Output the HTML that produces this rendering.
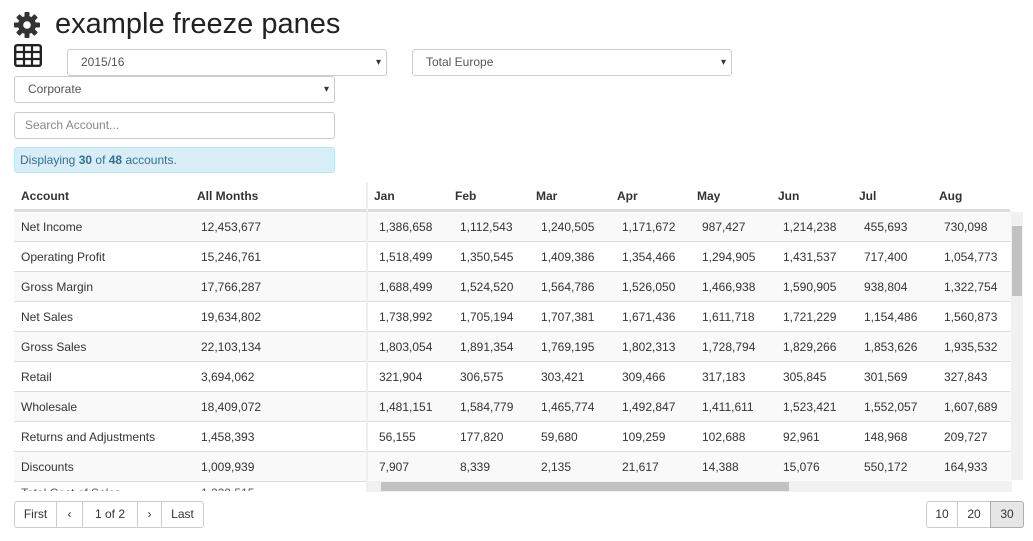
<!DOCTYPE html>
<html><head><meta charset="utf-8"><style>
*{box-sizing:border-box;margin:0;padding:0}
body{width:1033px;height:541px;overflow:hidden;background:#fff;font-family:"Liberation Sans",sans-serif;color:#333;font-size:12px;position:relative}
.a{position:absolute}
.sel{position:absolute;border:1px solid #ccc;border-radius:3px;height:27px;line-height:25px;padding-left:13px;font-size:12px;color:#555;background:#fff}
.sel:after{content:"▾";position:absolute;right:5px;top:0;font-size:10px;color:#333}
.hd{position:absolute;top:182px;height:28px;line-height:28px;font-weight:bold;font-size:12px;color:#333}
.row{position:absolute;height:30px;line-height:32px;border-top:1px solid #ddd;font-size:12px}
.row span{position:absolute;top:0}
.pg{position:absolute;top:501px;height:27px;line-height:25px;border:1px solid #ccc;text-align:center;font-size:12px;color:#333;background:#fff}
</style></head><body>
<svg class="a" style="left:14px;top:12px" width="26" height="26" viewBox="0 0 26 26"><g fill="#333"><circle cx="13" cy="13" r="9"/><g><rect x="10.5" y="0" width="5" height="26" rx="1"/><rect x="10.5" y="0" width="5" height="26" rx="1" transform="rotate(45 13 13)"/><rect x="10.5" y="0" width="5" height="26" rx="1" transform="rotate(90 13 13)"/><rect x="10.5" y="0" width="5" height="26" rx="1" transform="rotate(135 13 13)"/></g></g><circle cx="13" cy="13" r="3.8" fill="#fff"/></svg>
<div class="a" style="left:55px;top:6px;font-size:29px;color:#222;line-height:36px">example freeze panes</div>
<svg class="a" style="left:14px;top:44px" width="28" height="23" viewBox="0 0 28 23"><rect x="1.2" y="1.2" width="25.6" height="20.6" rx="2" fill="none" stroke="#222" stroke-width="2.4"/><path d="M1 8H27M1 15H27M10 1V22M18 1V22" stroke="#222" stroke-width="2.2"/></svg>
<div class="sel" style="left:67px;top:49px;width:320px">2015/16</div>
<div class="sel" style="left:412px;top:49px;width:320px">Total Europe</div>
<div class="sel" style="left:14px;top:76px;width:321px">Corporate</div>
<div class="a" style="left:14px;top:112px;width:321px;height:27px;border:1px solid #ccc;border-radius:3px;line-height:25px;padding-left:10px;color:#888">Search Account...</div>
<div class="a" style="left:14px;top:147px;width:321px;height:26px;border:1px solid #bce8f1;background:#d9edf7;border-radius:3px;line-height:24px;padding-left:5px;color:#31708f">Displaying <b>30</b> of <b>48</b> accounts.</div>
<div class="hd" style="left:21px">Account</div>
<div class="hd" style="left:197px">All Months</div>
<div class="hd" style="left:374px">Jan</div><div class="hd" style="left:455px">Feb</div><div class="hd" style="left:536px">Mar</div><div class="hd" style="left:617px">Apr</div><div class="hd" style="left:697px">May</div><div class="hd" style="left:778px">Jun</div><div class="hd" style="left:859px">Jul</div><div class="hd" style="left:939px">Aug</div>
<div class="a" style="left:14px;top:209px;width:996px;height:3px;background:#ddd"></div>
<div class="a" style="left:366px;top:182px;width:2px;height:310px;background:#eee"></div>
<div id="rows"></div>
<div class="a" style="left:368px;top:481px;width:644px;height:11px;background:#f1f1f1"></div>
<div class="a" style="left:381px;top:482px;width:408px;height:9px;background:#c1c1c1"></div>
<div class="a" style="left:1011px;top:212px;width:12px;height:268px;background:#f1f1f1"></div>
<div class="a" style="left:1012px;top:226px;width:10px;height:70px;background:#c1c1c1"></div>
<div class="a" style="left:14px;top:482px;width:352px;height:9px;overflow:hidden"><div style="position:absolute;top:4px;left:7px;color:#555">Total Cost of Sales</div><div style="position:absolute;top:4px;left:187px;color:#555">1,229,515</div></div>
<div class="pg" style="left:14px;width:43px;border-radius:3px 0 0 3px">First</div>
<div class="pg" style="left:56px;width:27px">‹</div>
<div class="pg" style="left:82px;width:56px">1 of 2</div>
<div class="pg" style="left:137px;width:25px">›</div>
<div class="pg" style="left:161px;width:43px;border-radius:0 3px 3px 0">Last</div>
<div class="pg" style="left:926px;width:32px;border-radius:3px 0 0 3px">10</div>
<div class="pg" style="left:957px;width:34px">20</div>
<div class="pg" style="left:990px;width:34px;background:#e6e6e6;border-color:#adadad;border-radius:0 3px 3px 0">30</div>
<script>
var d=[["Net Income","12,453,677","1,386,658","1,112,543","1,240,505","1,171,672","987,427","1,214,238","455,693","730,098"],
["Operating Profit","15,246,761","1,518,499","1,350,545","1,409,386","1,354,466","1,294,905","1,431,537","717,400","1,054,773"],
["Gross Margin","17,766,287","1,688,499","1,524,520","1,564,786","1,526,050","1,466,938","1,590,905","938,804","1,322,754"],
["Net Sales","19,634,802","1,738,992","1,705,194","1,707,381","1,671,436","1,611,718","1,721,229","1,154,486","1,560,873"],
["Gross Sales","22,103,134","1,803,054","1,891,354","1,769,195","1,802,313","1,728,794","1,829,266","1,853,626","1,935,532"],
["Retail","3,694,062","321,904","306,575","303,421","309,466","317,183","305,845","301,569","327,843"],
["Wholesale","18,409,072","1,481,151","1,584,779","1,465,774","1,492,847","1,411,611","1,523,421","1,552,057","1,607,689"],
["Returns and Adjustments","1,458,393","56,155","177,820","59,680","109,259","102,688","92,961","148,968","209,727"],
["Discounts","1,009,939","7,907","8,339","2,135","21,617","14,388","15,076","550,172","164,933"]];
var xs=[7,187,365,446,527,608,688,769,850,930],h="";
d.forEach(function(r,i){var t=212+i*30,bg=i%2==0?"#f9f9f9":"#fff";
h+='<div class="row" style="left:14px;top:'+(t-1)+'px;width:352px;background:'+bg+'"></div>';
h+='<div class="row" style="left:368px;top:'+(t-1)+'px;width:643px;background:'+bg+'"></div>';
h+='<div class="row" style="left:14px;top:'+(t-1)+'px;width:997px;border:none">';
r.forEach(function(c,j){h+='<span style="left:'+xs[j]+'px">'+c+'</span>'});h+='</div>';});
h+='<div class="a" style="left:14px;top:481px;width:352px;height:1px;background:#ddd"></div>';
document.getElementById("rows").innerHTML=h;
</script>
</body></html>
